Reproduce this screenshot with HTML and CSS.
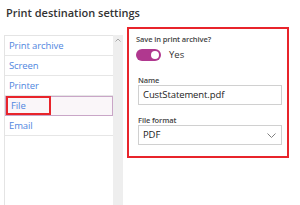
FILE: index.html
```html
<!DOCTYPE html>
<html>
<head>
<meta charset="utf-8">
<link rel="stylesheet" href="styles.css">
</head>
<body>
<div class="page">
  <div class="title">Print destination settings</div>
  <div class="row">
    <div class="list">
      <div class="item">Print archive</div>
      <div class="item">Screen</div>
      <div class="item">Printer</div>
      <div class="item selected"><span class="mark">File</span></div>
      <div class="item">Email</div>
    </div>
    <div class="scroll">
      <svg class="arrow" width="6" height="4" viewBox="0 0 6 4"><path d="M0.5 3.5 L3 1 L5.5 3.5" fill="none" stroke="#a8a8a8" stroke-width="1"/></svg>
    </div>
    <div class="panel">
      <div class="label">Save in print archive?</div>
      <div class="toggle-row">
        <div class="toggle"><div class="knob"></div></div>
        <span class="yes">Yes</span>
      </div>
      <div class="field">
        <div class="label name-label">Name</div>
        <div class="input">CustStatement.pdf</div>
        <div class="label format-label">File format</div>
        <div class="input select">
          <span>PDF</span>
          <svg width="9" height="5" viewBox="0 0 9 5"><path d="M0.5 0.5 L4.5 4.5 L8.5 0.5" fill="none" stroke="#808080" stroke-width="1"/></svg>
        </div>
      </div>
    </div>
  </div>
</div>
</body>
</html>
```
FILE: styles.css
```css
html, body {
  margin: 0;
  padding: 0;
  background: #ffffff;
}
.page {
  width: 300px;
  height: 205px;
  display: flex;
  flex-direction: column;
  font-family: "Open Sans", "Noto Sans", sans-serif;
  overflow: hidden;
}
.title {
  margin: 4px 0 0 6px;
  height: 18px;
  line-height: 18px;
  font-size: 11px;
  font-weight: 600;
  color: #333333;
}
.row {
  display: flex;
  flex: 1;
  margin-top: 5px;
}
.list {
  margin-left: 4px;
  margin-top: 8px;
  width: 108px;
  border-left: 1px solid #e4e4e4;
  border-top: 1px solid #e4e4e4;
  display: flex;
  flex-direction: column;
}
.item {
  height: 19px;
  line-height: 19px;
  border-bottom: 1px solid #e6e6e6;
  padding-left: 4px;
  font-size: 9.5px;
  color: #4f86e0;
  letter-spacing: -0.1px;
}
.item.selected {
  background: #faf6f9;
  border: 1px solid #c9a6c7;
  height: 18px;
  line-height: 18px;
  padding-left: 0;
}
.mark {
  display: inline-block;
  width: 38px;
  height: 15px;
  line-height: 15px;
  padding-left: 3px;
  border: 2px solid #e8242b;
  margin-top: -1px;
  vertical-align: top;
}
.scroll {
  margin-top: 8px;
  width: 10px;
  background: #eeeeee;
  display: flex;
  justify-content: center;
}
.arrow {
  margin-top: 3px;
}
.panel {
  margin-left: 4px;
  width: 151px;
  height: 122px;
  border: 2px solid #e8242b;
  padding: 5px 0 0 7px;
  display: flex;
  flex-direction: column;
}
.label {
  font-size: 7.5px;
  line-height: 10px;
  height: 10px;
  font-weight: 600;
  color: #444444;
  letter-spacing: -0.1px;
}
.toggle-row {
  display: flex;
  align-items: center;
  margin-top: 4px;
}
.toggle {
  width: 25px;
  height: 12px;
  border-radius: 6px;
  background: #b0388f;
  position: relative;
}
.knob {
  position: absolute;
  right: 2px;
  top: 2px;
  width: 8px;
  height: 8px;
  border-radius: 50%;
  background: #ffffff;
}
.yes {
  margin-left: 8px;
  font-size: 9.5px;
  color: #333333;
}
.field {
  margin-left: 2px;
  width: 144px;
  display: flex;
  flex-direction: column;
}
.name-label {
  margin-top: 14px;
}
.format-label {
  margin-top: 10px;
}
.input {
  height: 18px;
  line-height: 18px;
  border: 1px solid #d0d0d0;
  padding-left: 4px;
  font-size: 9.5px;
  color: #222222;
  letter-spacing: -0.1px;
}
.select {
  display: flex;
  justify-content: space-between;
  align-items: center;
  padding-right: 5px;
}
```
